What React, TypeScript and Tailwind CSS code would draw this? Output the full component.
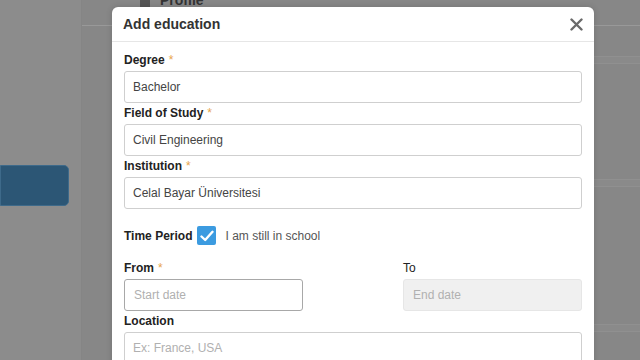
import React from "react";

type FieldProps = {
  label: string;
  required?: boolean;
  value?: string;
  placeholder?: string;
};

const Label: React.FC<{ text: string; required?: boolean; className?: string }> = ({ text, required, className }) => (
  <div className={`h-[16px] leading-[16px] text-[12px] font-bold text-[#222] ${className ?? ""}`}>
    {text}
    {required && <span className="ml-[4px] text-[#e8a54c] font-normal">*</span>}
  </div>
);

const Field: React.FC<FieldProps> = ({ label, required, value, placeholder }) => (
  <div className="mt-[2px]">
    <Label text={label} required={required} />
    <div className="mt-[3px] h-[32px] rounded-[3px] border border-[#cfcfcf] px-[8px] flex items-center text-[12px]">
      {value ? <span className="text-[#444]">{value}</span> : <span className="text-[#b0b0b0]">{placeholder}</span>}
    </div>
  </div>
);

const CloseIcon = () => (
  <svg width="13" height="13" viewBox="0 0 13 13" className="text-[#6a6a6a]">
    <path d="M1.5 1.5 L11.5 11.5 M11.5 1.5 L1.5 11.5" stroke="currentColor" strokeWidth="2.4" strokeLinecap="round" />
  </svg>
);

const App: React.FC = () => {
  return (
    <div className="relative w-[640px] h-[360px] overflow-hidden bg-[#8c8c8c] font-['Liberation_Sans',Arial,sans-serif]">
      {/* dimmed page behind the dialog */}
      <div className="flex h-full">
        <div className="w-[82px] shrink-0 border-r border-[#858585]">
          <div className="mt-[165px] h-[41px] w-[69px] rounded-r-[5px] bg-[#2c5675] border border-[#3e6a8a]" />
        </div>
        <div className="flex-1 flex flex-col bg-[#878787]">
          <div className="h-[26px] border-b border-[#999] pl-[58px]">
            <div className="flex items-center gap-[10px] -mt-[10px]">
              <div className="w-[10px] h-[12px] bg-[#555]" />
              <span className="text-[14px] font-bold text-[#333]">Profile</span>
            </div>
          </div>
          <div className="flex-1 pl-[512px] flex flex-col">
            <div className="mt-[30px] h-[8px] border-y border-[#909090] bg-[#8a8a8a]" />
            <div className="mt-[115px] h-[8px] border-y border-[#909090] bg-[#8a8a8a]" />
            <div className="mt-[137px] h-[8px] border-y border-[#909090] bg-[#8a8a8a]" />
          </div>
        </div>
      </div>

      {/* dialog */}
      <div className="absolute left-[112px] top-[7px] w-[482px] h-[380px] bg-white rounded-[6px] shadow-[0_0_6px_rgba(0,0,0,0.15)]">
        <div className="h-[35px] px-[11px] flex items-center justify-between border-b border-[#e6e6e6]">
          <h2 className="text-[14px] font-bold text-[#333] pt-[1px]">Add education</h2>
          <CloseIcon />
        </div>
        <div className="px-[12px] pt-[8px]">
          <Field label="Degree" required value="Bachelor" />
          <Field label="Field of Study" required value="Civil Engineering" />
          <Field label="Institution" required value="Celal Bayar Üniversitesi" />

          <div className="mt-[17px] flex items-center h-[19px]">
            <span className="text-[12px] font-bold text-[#222]">Time Period</span>
            <div className="ml-[5px] w-[19px] h-[19px] rounded-[2px] bg-[#3c9be0] flex items-center justify-center">
              <svg width="14" height="12" viewBox="0 0 14 12">
                <path d="M1.5 6.5 L5.2 10 L12.5 1.8" fill="none" stroke="white" strokeWidth="2.4" strokeLinecap="round" strokeLinejoin="round" />
              </svg>
            </div>
            <span className="ml-[9px] text-[12px] text-[#555]">I am still in school</span>
          </div>

          <div className="mt-[15px] flex justify-between">
            <div className="w-[179px]">
              <Label text="From" required />
              <div className="mt-[3px] h-[32px] rounded-[3px] border border-[#a8a8a8] px-[9px] flex items-center text-[12px] text-[#b0b0b0]">
                Start date
              </div>
            </div>
            <div className="w-[179px]">
              <Label text="To" className="font-normal text-[#111]" />
              <div className="mt-[3px] h-[32px] rounded-[3px] border border-[#e6e6e6] bg-[#f0f0f0] px-[9px] flex items-center text-[12px] text-[#b0b0b0]">
                End date
              </div>
            </div>
          </div>

          <Field label="Location" placeholder="Ex: France, USA" />
        </div>
      </div>
    </div>
  );
};

export default App;
